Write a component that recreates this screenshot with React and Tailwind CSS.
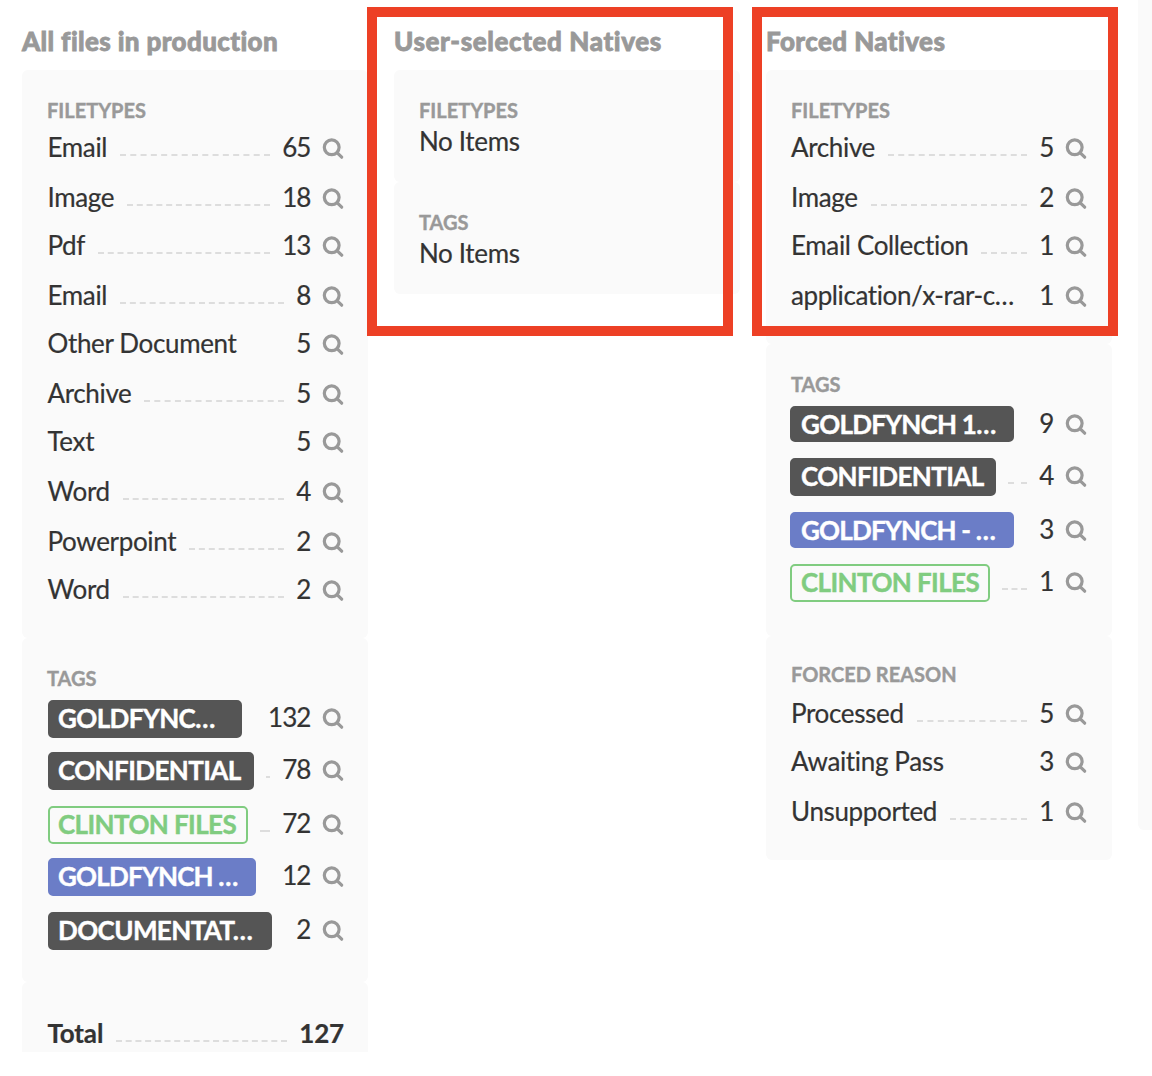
import clsx from 'clsx';

const allFiletypes = [
  { label: 'Email', count: 65, height: 'h-[50px]' },
  { label: 'Image', count: 18, height: 'h-12' },
  { label: 'Pdf', count: 13, height: 'h-[50px]' },
  { label: 'Email', count: 8, height: 'h-12' },
  { label: 'Other Document', count: 5, height: 'h-[50px]', noLeader: true },
  { label: 'Archive', count: 5, height: 'h-12' },
  { label: 'Text', count: 5, height: 'h-[50px]', noLeader: true },
  { label: 'Word', count: 4, height: 'h-[50px]' },
  { label: 'Powerpoint', count: 2, height: 'h-12' },
  { label: 'Word', count: 2, height: 'h-12' },
];

const allTags = [
  { label: 'GOLDFYNC…', count: 132, color: 'dark', size: 'h-[38px] w-[194px]', height: 'h-[52px]', noLeader: true },
  { label: 'CONFIDENTIAL', count: 78, color: 'dark', size: 'h-[38px] w-[206px]', height: 'h-[54px]' },
  { label: 'CLINTON FILES', count: 72, color: 'green', size: 'h-[38px] w-[200px]', height: 'h-[52px]' },
  { label: 'GOLDFYNCH …', count: 12, color: 'blue', size: 'h-[38px] w-[208px]', height: 'h-[54px]', tracking: 'tracking-[-0.8px]', noLeader: true },
  { label: 'DOCUMENTAT…', count: 2, color: 'dark', size: 'h-[38px] w-[224px]', height: 'h-[52px]', noLeader: true },
];

const forcedFiletypes = [
  { label: 'Archive', count: 5, height: 'h-[50px]' },
  { label: 'Image', count: 2, height: 'h-12' },
  { label: 'Email Collection', count: 1, height: 'h-[50px]' },
  { label: 'application/x-rar-c…', count: 1, height: 'h-12', tracking: 'tracking-[-0.4px]', noLeader: true },
];

const forcedTags = [
  { label: 'GOLDFYNCH 1…', count: 9, color: 'dark', size: 'h-9 w-[224px]', height: 'h-[52px]', tracking: 'tracking-[-0.75px]', noLeader: true },
  { label: 'CONFIDENTIAL', count: 4, color: 'dark', size: 'h-[38px] w-[206px]', height: 'h-[54px]' },
  { label: 'GOLDFYNCH - …', count: 3, color: 'blue', size: 'h-9 w-[224px]', height: 'h-[52px]', tracking: 'tracking-[-0.8px]', noLeader: true },
  { label: 'CLINTON FILES', count: 1, color: 'green', size: 'h-[38px] w-[200px]', height: 'h-[52px]' },
];

const forcedReasons = [
  { label: 'Processed', count: 5, height: 'h-12' },
  { label: 'Awaiting Pass', count: 3, height: 'h-[50px]', noLeader: true },
  { label: 'Unsupported', count: 1, height: 'h-12' },
];

const TagColor = {
  dark: 'border-[#555] bg-[#555] text-white',
  blue: 'border-[#6b7dc7] bg-[#6b7dc7] text-white',
  green: 'border-[#80cc80] text-[#80cc80]',
};

function SearchIcon() {
  return (
    <svg
      className="mt-[9px] ml-[11.5px] size-[22px] shrink-0 text-[#999]"
      viewBox="0 0 22 22"
      fill="none"
      stroke="currentColor"
      strokeWidth="3.2"
    >
      <circle cx="9.7" cy="9.3" r="7.4" />
      <path d="M15 14.6l4.7 4.6" strokeWidth="3.2" strokeLinecap="round" />
    </svg>
  );
}

function Leader({ hidden }) {
  return (
    <span
      className={clsx(
        'mr-3 ml-[13px] h-[27px] min-w-0 flex-1 border-[#ddd]',
        !hidden && 'border-b-2 border-dashed',
      )}
    />
  );
}

function Count({ value }) {
  return (
    <>
      <span className="tracking-[-0.9px]">{value}</span>
      <SearchIcon />
    </>
  );
}

function Row({ item }) {
  return (
    <li className={clsx('flex items-start', item.height)}>
      <span className={clsx('whitespace-nowrap', item.tracking)}>{item.label}</span>
      <Leader hidden={item.noLeader} />
      <Count value={item.count} />
    </li>
  );
}

function TagRow({ item, padding }) {
  return (
    <li className={clsx('flex items-start', item.height)}>
      <span
        className={clsx(
          'mt-px -mr-px flex shrink-0 items-start rounded-[5px] border-2 font-bold whitespace-nowrap [-webkit-text-stroke:0.4px]',
          item.tracking || 'tracking-[-0.6px]',
          padding,
          TagColor[item.color],
          item.size,
        )}
      >
        <span className="-mt-0.5">{item.label}</span>
      </span>
      <Leader hidden={item.noLeader} />
      <Count value={item.count} />
    </li>
  );
}

function Section({ title, className, children }) {
  return (
    <section className={clsx('rounded-md bg-[#fafafa] pl-[25px]', className)}>
      {title && (
        <h3 className="text-[20px] leading-[30px] font-bold tracking-normal text-[#999] [-webkit-text-stroke:0.4px]">
          {title}
        </h3>
      )}
      {children}
    </section>
  );
}

function Column({ title, tracking, children }) {
  return (
    <div className="w-[346px] shrink-0">
      <h2
        className={clsx(
          'h-[70px] pt-[22px] text-[26px] leading-[38px] font-black whitespace-nowrap text-[#999] [-webkit-text-stroke:0.8px]',
          tracking,
        )}
      >
        {title}
      </h2>
      {children}
    </div>
  );
}

export default function App() {
  return (
    <div className="relative flex h-[1076px] w-[1152px] gap-[26px] overflow-hidden bg-white pl-[22px] font-['Lato',sans-serif] text-[26px] leading-9 tracking-[-0.35px] text-[#333] [-webkit-text-stroke:0.2px]">
      <Column title="All files in production" tracking="tracking-[0.37px]">
        <Section title="FILETYPES" className="h-[568px] pt-[25px] pr-6 pl-[25.5px]">
          <ul className="mt-1 ml-[0.5px]">
            {allFiletypes.map((item, i) => (
              <Row key={i} item={item} />
            ))}
          </ul>
        </Section>
        <Section title="TAGS" className="h-[344px] pt-[25px] pr-6">
          <ul className="mt-1.5 ml-px">
            {allTags.map((item) => (
              <TagRow key={item.label} item={item} padding="pl-2" />
            ))}
          </ul>
        </Section>
        <Section className="h-[70px] rounded-b-none pt-[33px] pr-6">
          <div className="ml-[0.5px] flex items-start font-bold tracking-[-0.15px]">
            <span>Total</span>
            <Leader />
            <span>127</span>
          </div>
        </Section>
      </Column>

      <Column title="User-selected Natives" tracking="tracking-[0.6px]">
        <Section title="FILETYPES" className="h-28 pt-[25px]">
          <p className="-mt-0.5">No Items</p>
        </Section>
        <Section title="TAGS" className="h-28 pt-[25px]">
          <p className="-mt-0.5">No Items</p>
        </Section>
      </Column>

      <Column title="Forced Natives" tracking="tracking-[0.4px]">
        <Section title="FILETYPES" className="h-[274px] pt-[25px] pr-[25px]">
          <ul className="mt-1">
            {forcedFiletypes.map((item) => (
              <Row key={item.label} item={item} />
            ))}
          </ul>
        </Section>
        <Section title="TAGS" className="h-[292px] pt-[25px] pr-[25px]">
          <ul className="mt-1.5 -ml-px">
            {forcedTags.map((item) => (
              <TagRow key={item.label} item={item} padding="pl-[9px]" />
            ))}
          </ul>
        </Section>
        <Section title="FORCED REASON" className="h-[224px] pt-[23px] pr-[25px]">
          <ul className="mt-1.5">
            {forcedReasons.map((item) => (
              <Row key={item.label} item={item} />
            ))}
          </ul>
        </Section>
      </Column>

      <div className="h-[830px] w-[346px] shrink-0 rounded-b-md bg-[#fafafa]" />

      {/* highlight frames */}
      <div className="absolute top-[7px] left-[367px] h-[329px] w-[366px] border-10 border-[#ed4025]" />
      <div className="absolute top-[7px] left-[752px] h-[329px] w-[366px] border-10 border-[#ed4025]" />
    </div>
  );
}
